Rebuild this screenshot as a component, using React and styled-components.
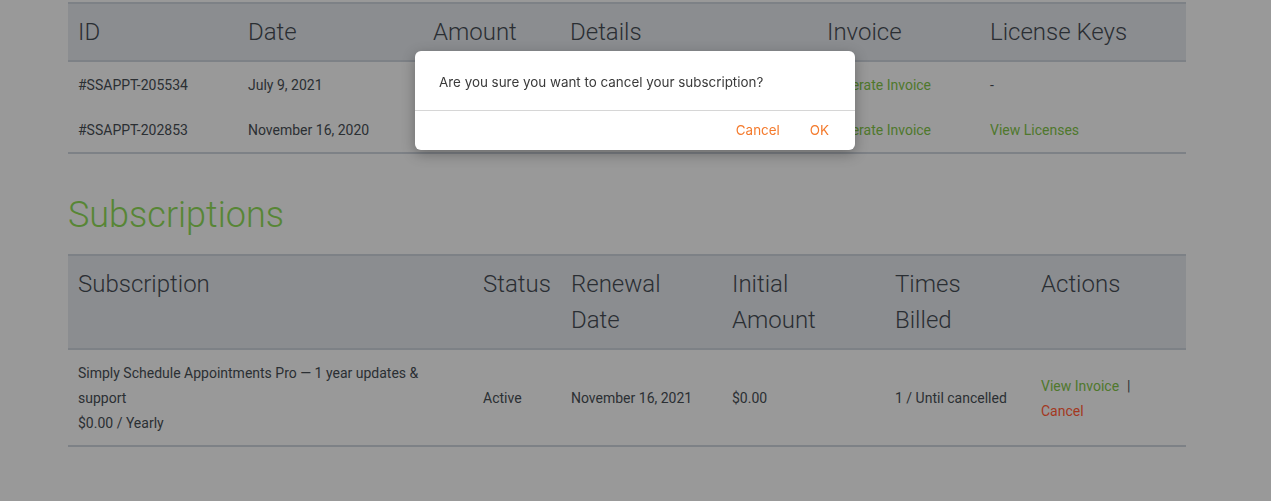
import React from 'react';
import styled, { createGlobalStyle } from 'styled-components';

const GlobalStyle = createGlobalStyle`
  html, body {
    margin: 0;
    padding: 0;
    background: #999999;
  }
  body {
    font-family: Roboto, "Noto Sans", "Liberation Sans", sans-serif;
    color: #2b2f33;
  }
`;

const Page = styled.div`
  width: 1118px;
  margin-left: 68px;
  padding-top: 2px;
`;

const Table = styled.table`
  width: 100%;
  border-collapse: collapse;
  table-layout: fixed;
  border-top: 2px solid #7d8186;
  border-bottom: 2px solid #7d8186;
`;

const Th = styled.th`
  box-sizing: border-box;
  width: ${(p) => p.$w}px;
  background: #8b8d90;
  border-bottom: 2px solid #7d8186;
  padding: 10px 10px;
  text-align: left;
  vertical-align: top;
  font-weight: 300;
  font-size: 24px;
  line-height: 36px;
  color: #2a2e33;
`;

const Td = styled.td`
  padding: 11px 10px 9px;
  font-size: 14px;
  line-height: 25px;
  vertical-align: middle;
  color: #2b2f33;
`;

const Link = styled.a`
  color: ${(p) => (p.$danger ? '#a3381f' : '#4f782c')};
  text-decoration: none;
  white-space: nowrap;
`;

const Sep = styled.span`
  margin: 0 6px 0 8px;
  color: #2b2f33;
`;

const Heading = styled.h2`
  margin: 40px 0 17px;
  font-size: 36px;
  line-height: 43px;
  font-weight: 300;
  color: #578635;
`;

const Dialog = styled.div`
  position: fixed;
  top: 51px;
  left: 415px;
  width: 440px;
  background: #ffffff;
  border-radius: 6px;
  box-shadow: 0 4px 14px rgba(0, 0, 0, 0.3);
  font-family: Inter, "Liberation Sans", sans-serif;
`;

const DialogBody = styled.div`
  padding: 22px 24px 19px;
  font-size: 13.4px;
  line-height: 18px;
  color: #3a3a3a;
  border-bottom: 1px solid #d6d6d6;
`;

const DialogActions = styled.div`
  display: flex;
  justify-content: flex-end;
  gap: 30px;
  padding: 10px 26px 11px;
`;

const DialogButton = styled.button`
  background: none;
  border: none;
  padding: 0;
  font-family: inherit;
  font-size: 13.4px;
  line-height: 18px;
  color: #f47a2c;
  cursor: pointer;
`;

const orders = [
  { id: '#SSAPPT-205534', date: 'July 9, 2021', keys: '-' },
  { id: '#SSAPPT-202853', date: 'November 16, 2020', keys: 'View Licenses' },
];

export default function App() {
  return (
    <>
      <GlobalStyle />
      <Page>
        <Table>
          <thead>
            <tr>
              <Th $w={170}>ID</Th>
              <Th $w={185}>Date</Th>
              <Th $w={137}>Amount</Th>
              <Th $w={257}>Details</Th>
              <Th $w={163}>Invoice</Th>
              <Th $w={206}>License Keys</Th>
            </tr>
          </thead>
          <tbody>
            {orders.map((o) => (
              <tr key={o.id}>
                <Td>{o.id}</Td>
                <Td>{o.date}</Td>
                <Td>$0.00</Td>
                <Td></Td>
                <Td>
                  <Link href="#">Generate Invoice</Link>
                </Td>
                <Td>{o.keys === '-' ? '-' : <Link href="#">{o.keys}</Link>}</Td>
              </tr>
            ))}
          </tbody>
        </Table>

        <Heading>Subscriptions</Heading>

        <Table>
          <thead>
            <tr>
              <Th $w={405}>Subscription</Th>
              <Th $w={88}>Status</Th>
              <Th $w={161}>Renewal Date</Th>
              <Th $w={163}>Initial Amount</Th>
              <Th $w={146}>Times Billed</Th>
              <Th $w={155}>Actions</Th>
            </tr>
          </thead>
          <tbody>
            <tr>
              <Td>
                Simply Schedule Appointments Pro — 1 year updates &amp; support
                <br />
                $0.00 / Yearly
              </Td>
              <Td>Active</Td>
              <Td>November 16, 2021</Td>
              <Td>$0.00</Td>
              <Td>1 / Until cancelled</Td>
              <Td>
                <Link href="#">View Invoice</Link>
                <Sep>|</Sep>{' '}
                <Link href="#" $danger>
                  Cancel
                </Link>
              </Td>
            </tr>
          </tbody>
        </Table>
      </Page>

      <Dialog role="dialog">
        <DialogBody>Are you sure you want to cancel your subscription?</DialogBody>
        <DialogActions>
          <DialogButton>Cancel</DialogButton>
          <DialogButton>OK</DialogButton>
        </DialogActions>
      </Dialog>
    </>
  );
}
